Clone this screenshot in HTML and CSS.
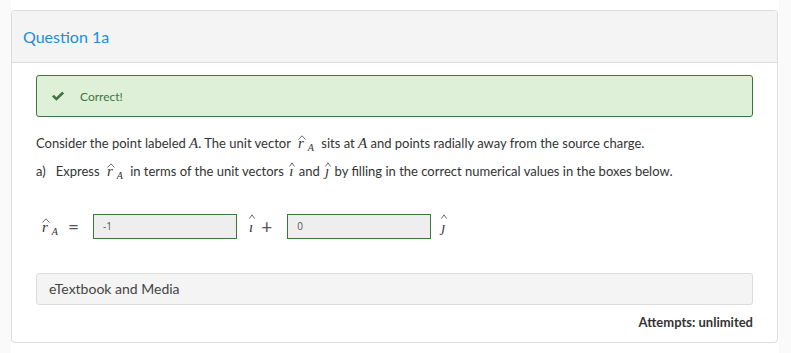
FILE: index.html
```html
<!DOCTYPE html>
<html>
<head>
<meta charset="utf-8">
<link rel="stylesheet" href="styles.css">
</head>
<body>
<div class="page">
  <div class="card">
    <div class="card-header">Question 1a</div>
    <div class="card-body">
      <div class="alert">
        <svg class="check" width="14" height="11" viewBox="0 0 14 11"><path d="M1 5.6 L2.9 3.8 L5.4 6.2 L11.2 0.6 L13.1 2.4 L5.4 9.8 Z" fill="#3c763d"/></svg>
        <span class="alert-text">Correct!</span>
      </div>
      <p class="line first">Consider the point labeled <span class="mi">A</span>. The unit vector <span class="vec"><span class="hat"><span class="mi">r</span><svg class="hat-mark" width="8" height="5" viewBox="0 0 8 5"><path d="M0.5 4.5 L4 0.8 L7.5 4.5" fill="none" stroke="#444" stroke-width="0.8"/></svg></span><span class="sub">A</span></span> sits at <span class="mi">A</span> and points radially away from the source charge.</p>
      <p class="line">a)&nbsp;&nbsp;&nbsp;Express <span class="vec"><span class="hat"><span class="mi">r</span><svg class="hat-mark" width="8" height="5" viewBox="0 0 8 5"><path d="M0.5 4.5 L4 0.8 L7.5 4.5" fill="none" stroke="#444" stroke-width="0.8"/></svg></span><span class="sub">A</span></span> in terms of the unit vectors <span class="hat sm"><span class="mi">&#305;</span><svg class="hat-mark" width="6" height="5" viewBox="0 0 6 5"><path d="M0.5 4.5 L3 0.8 L5.5 4.5" fill="none" stroke="#444" stroke-width="0.8"/></svg></span> and <span class="hat sm"><span class="mi">&#567;</span><svg class="hat-mark" width="6" height="5" viewBox="0 0 6 5"><path d="M0.5 4.5 L3 0.8 L5.5 4.5" fill="none" stroke="#444" stroke-width="0.8"/></svg></span> by filling in the correct numerical values in the boxes below.</p>
      <div class="answer-row">
        <span class="vec lhs"><span class="hat"><span class="mi">r</span><svg class="hat-mark" width="8" height="5" viewBox="0 0 8 5"><path d="M0.5 4.5 L4 0.8 L7.5 4.5" fill="none" stroke="#444" stroke-width="0.8"/></svg></span><span class="sub">A</span></span>
        <span class="eq">=</span>
        <div class="input">-1</div>
        <span class="hat sm unit"><span class="mi">&#305;</span><svg class="hat-mark" width="6" height="5" viewBox="0 0 6 5"><path d="M0.5 4.5 L3 0.8 L5.5 4.5" fill="none" stroke="#444" stroke-width="0.8"/></svg></span>
        <span class="plus">+</span>
        <div class="input">0</div>
        <span class="hat sm unit"><span class="mi">&#567;</span><svg class="hat-mark" width="6" height="5" viewBox="0 0 6 5"><path d="M0.5 4.5 L3 0.8 L5.5 4.5" fill="none" stroke="#444" stroke-width="0.8"/></svg></span>
      </div>
      <div class="media">eTextbook and Media</div>
      <div class="attempts">Attempts: unlimited</div>
    </div>
  </div>
</div>
</body>
</html>
```
FILE: styles.css
```css
html, body {
  margin: 0;
  padding: 0;
}
body {
  background: #fafafa;
  font-family: Lato, "Open Sans", sans-serif;
  color: #333;
}
.page {
  width: 768px;
  height: 353px;
  margin-left: 11px;
  background: #fff;
  padding-top: 10px;
  box-sizing: border-box;
}
.card {
  width: 767px;
  border: 1px solid #dcdcdc;
  border-radius: 4px;
  box-sizing: border-box;
  overflow: hidden;
}
.card-header {
  height: 52px;
  background: #f4f4f4;
  border-bottom: 1px solid #dcdcdc;
  padding-left: 11px;
  font-size: 16px;
  line-height: 52px;
  color: #1c8ed8;
  box-sizing: border-box;
}
.card-body {
  padding: 12px 24px 12px 24px;
}
.alert {
  height: 42px;
  box-sizing: border-box;
  border: 1px solid #3c763d;
  border-radius: 3px;
  background: #dff0d8;
  display: flex;
  align-items: center;
  padding-left: 14px;
}
.check {
  display: block;
}
.alert-text {
  margin-left: 15px;
  font-size: 12px;
  color: #3c763d;
}
.line {
  margin: 0;
  font-size: 13px;
  line-height: 18px;
  height: 18px;
  color: #333;
  white-space: nowrap;
}
.line.first {
  margin-top: 17px;
}
.line + .line {
  margin-top: 10px;
}
.mi {
  font-family: "Liberation Serif", "DejaVu Serif", serif;
  font-style: italic;
  font-size: 15px;
  line-height: 0;
}
.hat {
  position: relative;
  display: inline-block;
  line-height: 0;
}
.line .hat.sm {
  margin: 0 2px;
}
.hat-mark {
  position: absolute;
  left: 50%;
  top: -8px;
  margin-left: -3px;
}
.hat.sm .hat-mark {
  top: -9px;
  margin-left: -2px;
}
.vec {
  white-space: nowrap;
  margin: 0 4px;
}
.sub {
  font-family: "Liberation Serif", serif;
  font-style: italic;
  font-size: 10px;
  margin-left: 4px;
  vertical-align: -3px;
  line-height: 0;
}
.answer-row {
  display: flex;
  align-items: center;
  margin-top: 34px;
  padding-left: 6px;
  height: 25px;
}
.answer-row .hat,
.answer-row .vec,
.answer-row .mi {
  line-height: 16px;
}
.answer-row .hat .hat-mark {
  top: 0px;
}
.answer-row .hat.sm .hat-mark {
  top: -4px;
}
.lhs {
  margin: 0;
}
.eq {
  font-size: 19px;
  line-height: 20px;
  margin-left: 10px;
  margin-right: 14px;
  color: #555;
}
.input {
  width: 144px;
  height: 25px;
  box-sizing: border-box;
  border: 1px solid #3c763d;
  background: #eeeeee;
  font-family: "Open Sans", sans-serif;
  font-size: 10px;
  color: #555;
  padding-left: 9px;
  line-height: 23px;
}
.unit {
  margin-left: 12px;
}
.plus {
  font-size: 19px;
  line-height: 20px;
  margin-left: 8px;
  margin-right: 15px;
  color: #555;
}
.answer-row .input + .unit:last-child {
  margin-left: 10px;
}
.media {
  margin-top: 34px;
  height: 32px;
  box-sizing: border-box;
  border: 1px solid #dcdcdc;
  border-radius: 3px;
  background: #f4f4f4;
  padding-left: 12px;
  line-height: 30px;
  font-size: 14px;
  color: #444;
}
.attempts {
  text-align: right;
  font-size: 13px;
  font-weight: bold;
  color: #333;
  margin-top: 9px;
  line-height: 16px;
}
```
